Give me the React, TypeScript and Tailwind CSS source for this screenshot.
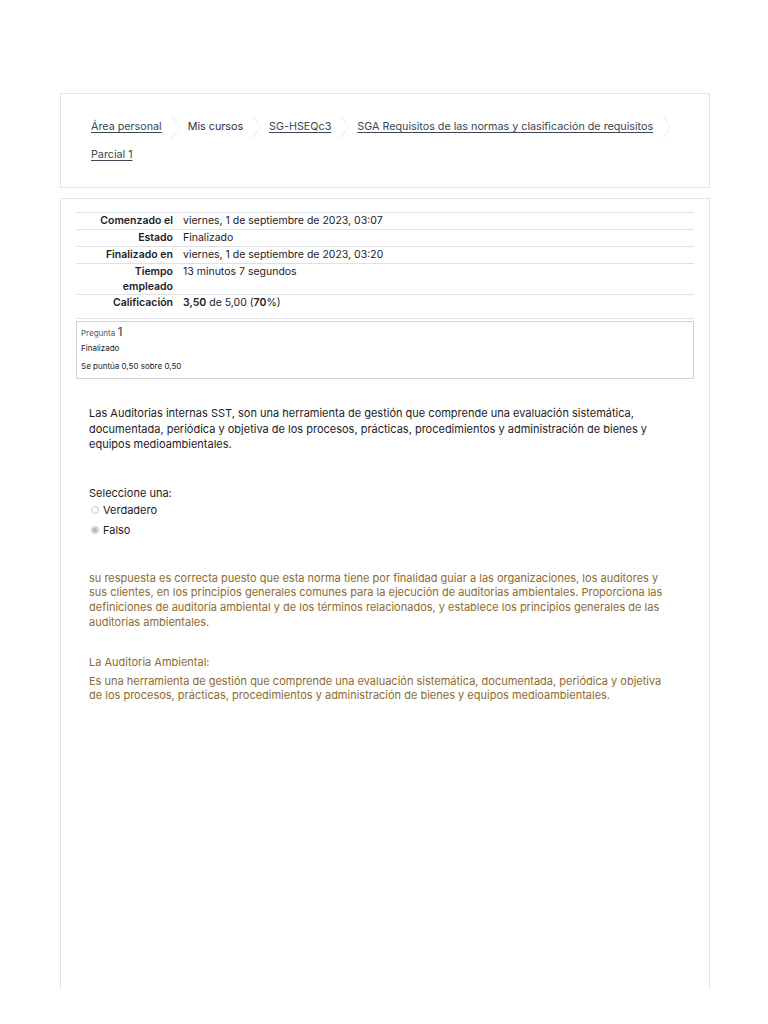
import React from 'react';

const font = { fontFamily: 'Inter, "Noto Sans", sans-serif' };

const Chevron = () => (
  <svg width="10" height="22" viewBox="0 0 10 22" className="mx-[8px] shrink-0">
    <path d="M1 0 L9 11 L1 22 L3 22 L10 11 L3 0 Z" fill="#eef2f7" />
  </svg>
);

const Crumb = ({ label, link = true }: { label: string; link?: boolean }) => (
  <span className={link ? 'text-[#3b4654] underline underline-offset-2' : 'text-[#2b2f33]'}>{label}</span>
);

const Row = ({ label, children, last, tall }: { label: React.ReactNode; children: React.ReactNode; last?: boolean; tall?: boolean }) => (
  <div className={`flex border-t border-[#dee2e6] ${last ? 'border-b pb-[7px]' : ''} ${tall ? 'leading-[15px]' : 'leading-[16px]'}`}>
    <div className="w-[102px] shrink-0 pr-[5px] text-right font-semibold">{label}</div>
    <div className="pl-[5px]">{children}</div>
  </div>
);

export default function App() {
  return (
    <div className="min-h-[1024px] bg-white text-[#1d2125]" style={font}>
      <div className="pt-[93px] px-[60px] w-[770px]">
        <div className="border border-[#e2e4e6] h-[95px] pl-[30px] pt-[19px] text-[10.75px]">
          <div className="flex flex-wrap items-center leading-[28px]">
            <Crumb label="Área personal" />
            <Chevron />
            <Crumb label="Mis cursos" link={false} />
            <Chevron />
            <Crumb label="SG-HSEQc3" />
            <Chevron />
            <Crumb label="SGA Requisitos de las normas y clasificación de requisitos" />
            <Chevron />
          </div>
          <div className="leading-[28px]">
            <Crumb label="Parcial 1" />
          </div>
        </div>

        <div className="mt-[10px] border-t border-l border-r border-[#e2e4e6] h-[792px] px-[15px] pt-[13px]">
          <div className="text-[10.5px] text-[#1d2125]">
            <Row label="Comenzado el">viernes, 1 de septiembre de 2023, 03:07</Row>
            <Row label="Estado">Finalizado</Row>
            <Row label="Finalizado en">viernes, 1 de septiembre de 2023, 03:20</Row>
            <Row label={<>Tiempo<br />empleado</>} tall>13 minutos 7 segundos</Row>
            <Row label="Calificación" last>
              <span className="font-semibold">3,50</span> de 5,00 (<span className="font-semibold">70</span>%)
            </Row>
          </div>

          <div className="mt-[2px] border border-[#cfd4d9] h-[58px] px-[4px] pt-[3px]">
            <div className="text-[#4a5a6a] text-[8px] leading-[14px]">
              Pregunta <span className="text-[12px] font-medium">1</span>
            </div>
            <div className="text-[8px] leading-[12px] mt-[2px]">Finalizado</div>
            <div className="text-[8px] leading-[12px] mt-[6px]">Se puntúa 0,50 sobre 0,50</div>
          </div>

          <div className="pl-[13px] pr-[20px] pt-[27px] text-[11px]">
            <p className="leading-[15.5px]">
              Las Auditorias internas SST, son una herramienta de gestión que comprende una evaluación sistemática,
              documentada, periódica y objetiva de los procesos, prácticas, procedimientos y administración de bienes y
              equipos medioambientales.
            </p>
            <div className="mt-[32px] leading-[16px]">Seleccione una:</div>
            <div className="flex items-center gap-[4px] leading-[18px] pl-[2px]">
              <span className="w-[8px] h-[8px] rounded-full border border-[#c8c8c8] bg-white" />
              <span>Verdadero</span>
            </div>
            <div className="flex items-center gap-[4px] leading-[18px] mt-[2px] pl-[2px]">
              <span className="w-[8px] h-[8px] rounded-full border border-[#c8c8c8] bg-[#dcdcdc] flex items-center justify-center">
                <span className="w-[4px] h-[4px] rounded-full bg-[#b5b5b5]" />
              </span>
              <span>Falso</span>
            </div>

            <div className="mt-[32px] text-[#8e6a2f] leading-[14.8px]">
              <p>
                su respuesta es correcta puesto que esta norma tiene por finalidad guiar a las organizaciones, los auditores y
                sus clientes, en los principios generales comunes para la ejecución de auditorias ambientales. Proporciona las
                definiciones de auditoría ambiental y de los términos relacionados, y establece los principios generales de las
                auditorías ambientales.
              </p>
              <p className="mt-[24px] leading-[16px]">La Auditoria Ambiental:</p>
              <p className="mt-[4px]">
                Es una herramienta de gestión que comprende una evaluación sistemática, documentada, periódica y objetiva
                de los procesos, prácticas, procedimientos y administración de bienes y equipos medioambientales.
              </p>
            </div>
          </div>
        </div>
      </div>
    </div>
  );
}
